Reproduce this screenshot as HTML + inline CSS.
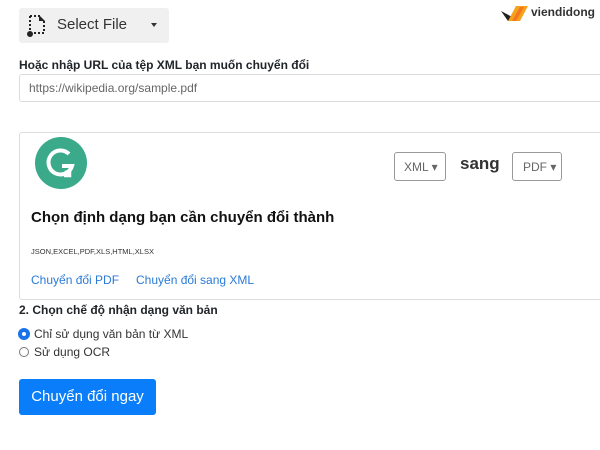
<!DOCTYPE html>
<html><head><meta charset="utf-8"><style>
*{box-sizing:border-box;margin:0;padding:0}
body{width:600px;height:450px;background:#fff;font-family:"Liberation Sans","DejaVu Sans",sans-serif;color:#212529;position:relative;overflow:hidden}
.a{position:absolute}
</style></head><body>
<div class="a" style="left:19px;top:8px;width:150px;height:35px;background:#f0f0f0;border-radius:3px"></div>
<svg class="a" style="left:26px;top:13px" width="26" height="26" viewBox="0 0 26 26"><path d="M4 3h10M4 3v17M4 20h14M18 8v12" stroke="#222" stroke-width="2" stroke-dasharray="2 2" fill="none"/><path d="M13 2l6 6h-6z" fill="#222"/><circle cx="4" cy="21" r="3" fill="#222"/></svg>
<div class="a" style="left:57px;top:16px;font-size:15px;color:#333">Select File</div>
<div class="a" style="left:151px;top:23px;border-left:3px solid transparent;border-right:3px solid transparent;border-top:4px solid #333"></div>
<svg class="a" style="left:500px;top:4px" width="30" height="18"><path d="M1 7l7 10 6-3z" fill="#222"/><path d="M8 17L16 2h12l-8 15z" fill="#f7a21b"/><path d="M12 17L20 3h4l-8 14z" fill="#f05a22" opacity=".6"/></svg>
<div class="a" style="left:531px;top:5px;font-size:12px;font-weight:bold;color:#333">viendidong</div>
<div class="a" style="left:19px;top:58px;font-size:12px;font-weight:bold">Hoặc nhập URL của tệp XML bạn muốn chuyển đổi</div>
<div class="a" style="left:19px;top:74px;width:590px;height:28px;border:1px solid #dcdcdc;border-radius:3px"></div>
<div class="a" style="left:29px;top:81px;font-size:12px;color:#666">https://wikipedia.org/sample.pdf</div>
<div class="a" style="left:19px;top:132px;width:590px;height:168px;border:1px solid #ddd;border-radius:3px"></div>
<div class="a" style="left:35px;top:137px;width:52px;height:52px;border-radius:50%;background:#3aaa8a"></div>
<svg class="a" style="left:35px;top:137px" width="52" height="52" viewBox="0 0 52 52"><path d="M34 17A12 12 0 1 0 37 29H27" stroke="#fff" stroke-width="4" fill="none"/><path d="M30 34l5 5M35 33v6h-6" stroke="#fff" stroke-width="2.5" fill="none"/></svg>
<div class="a" style="left:394px;top:152px;width:52px;height:29px;border:1px solid #999;border-radius:3px;font-size:12px;color:#666;padding:7px 0 0 9px">XML ▾</div>
<div class="a" style="left:460px;top:154px;font-size:17px;font-weight:bold;color:#333">sang</div>
<div class="a" style="left:512px;top:152px;width:50px;height:29px;border:1px solid #999;border-radius:3px;font-size:12px;color:#666;padding:7px 0 0 10px">PDF ▾</div>
<div class="a" style="left:31px;top:209px;font-size:15px;font-weight:bold;color:#111">Chọn định dạng bạn cần chuyển đổi thành</div>
<div class="a" style="left:31px;top:247px;font-size:7.5px;color:#333">JSON,EXCEL,PDF,XLS,HTML,XLSX</div>
<div class="a" style="left:31px;top:273px;font-size:12px;color:#2a7ad6">Chuyển đổi PDF</div>
<div class="a" style="left:136px;top:273px;font-size:12px;color:#2a7ad6">Chuyển đổi sang XML</div>
<div class="a" style="left:19px;top:303px;font-size:12px;font-weight:bold">2. Chọn chế độ nhận dạng văn bản</div>
<div class="a" style="left:19px;top:329px;width:10px;height:10px;border-radius:50%;border:3px solid #1a73e8;background:#fff;box-shadow:0 0 0 1px #1a73e8"></div>
<div class="a" style="left:34px;top:327px;font-size:12px;color:#333">Chỉ sử dụng văn bản từ XML</div>
<div class="a" style="left:19px;top:347px;width:10px;height:10px;border-radius:50%;border:1px solid #777"></div>
<div class="a" style="left:34px;top:345px;font-size:12px;color:#333">Sử dụng OCR</div>
<div class="a" style="left:19px;top:379px;width:137px;height:36px;background:#0a7dfb;border-radius:3px;color:#fff;font-size:15px;text-align:center;line-height:36px">Chuyển đổi ngay</div>
</body></html>
